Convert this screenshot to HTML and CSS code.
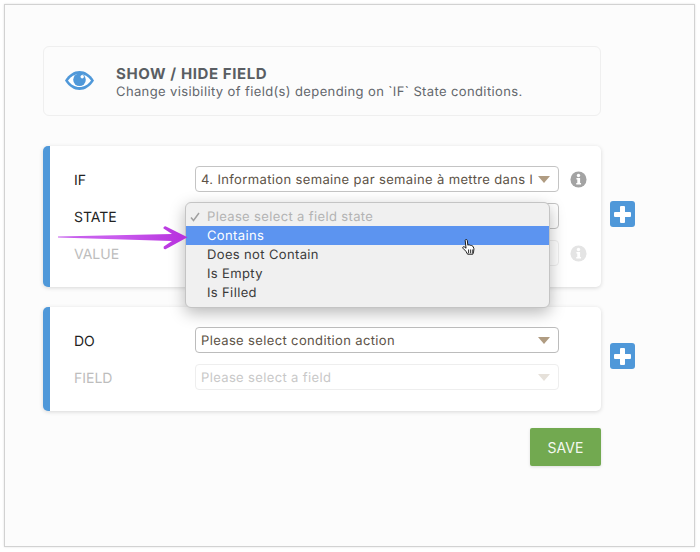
FILE: index.html
```html
<!DOCTYPE html>
<html lang="en">
<head>
<meta charset="utf-8">
<title>Show / Hide Field</title>
<link rel="stylesheet" href="styles.css">
</head>
<body>
<main class="frame">
  <header class="intro">
    <svg class="eye" viewBox="0 0 29 19" width="29" height="19" aria-hidden="true">
      <path fill="#4f98d9" d="M0 9.500C4 3.200 9 0 14.500 0S25 3.200 29 9.500C25 15.800 20 19 14.500 19S4 15.800 0 9.500z"/>
      <path fill="#fff" d="M3 9.500C6 5.200 9.600 3 14.500 3S23 5.200 26 9.500C23 13.800 19.400 16 14.500 16S6 13.800 3 9.500z"/>
      <circle cx="14.500" cy="8.800" r="6.300" fill="#4f98d9"/>
      <circle cx="17.200" cy="5.700" r="1.700" fill="#fff"/>
    </svg>
    <div class="intro-text">
      <h1 class="intro-title">SHOW / HIDE FIELD</h1>
      <p class="intro-sub">Change visibility of field(s) depending on `IF` State conditions.</p>
    </div>
  </header>

  <section class="group group-if">
    <div class="card">
      <div class="row">
        <span class="label">IF</span>
        <div class="select"><span class="select-text">4. Information semaine par semaine à mettre dans l</span><i class="caret"></i></div>
        <svg class="info" viewBox="0 0 18 18" width="17" height="17" aria-hidden="true"><circle cx="9" cy="9" r="8.500" fill="#a3a3a3"/><circle cx="9" cy="4.700" r="1.800" fill="#fff"/><path fill="#fff" d="M6.800 7.400h3.900v5.400h1v1.600H6.600v-1.600h1.100V9H6.800z"/></svg>
      </div>
      <div class="row">
        <span class="label">STATE</span>
        <div class="select"></div>
        <span class="info-space"></span>
      </div>
      <div class="row row-off">
        <span class="label">VALUE</span>
        <div class="select"></div>
        <svg class="info" viewBox="0 0 18 18" width="17" height="17" aria-hidden="true"><circle cx="9" cy="9" r="8.500" fill="#e4e4e4"/><circle cx="9" cy="4.700" r="1.800" fill="#fff"/><path fill="#fff" d="M6.800 7.400h3.900v5.400h1v1.600H6.600v-1.600h1.100V9H6.800z"/></svg>
      </div>
    </div>
    <button class="add" aria-label="Add"><i class="add-h"></i><i class="add-v"></i></button>

    <ul class="menu">
      <li class="menu-item menu-head"><svg class="tick" viewBox="0 0 10 10" width="10" height="10" aria-hidden="true"><path fill="none" stroke="#a0a0a0" stroke-width="1.500" d="M1 5.500l2.500 3L9 1"/></svg>Please select a field state</li>
      <li class="menu-item menu-on">Contains</li>
      <li class="menu-item">Does not Contain</li>
      <li class="menu-item">Is Empty</li>
      <li class="menu-item">Is Filled</li>
    </ul>
    <svg class="arrow" viewBox="0 0 130 26" width="130" height="26" aria-hidden="true">
      <defs><linearGradient id="arrowfill" x1="0" x2="1" y1="0" y2="0"><stop offset="0" stop-color="#c660ec"/><stop offset="0.45" stop-color="#c95cee"/><stop offset="1" stop-color="#b62fdd"/></linearGradient></defs>
      <path fill="url(#arrowfill)" d="M0 11.500L114 9 105.500 3.500Q105 1.500 107.500 1.200L129.500 12.300 107.500 24.200Q105 24.500 105.800 21.500L114 16 0 12.500z"/>
    </svg>
    <svg class="hand" viewBox="0 0 16 20" width="16" height="19" aria-hidden="true">
      <path fill="#fff" stroke="#111" stroke-width="1" stroke-linejoin="round" d="M4 1.500c0-1.300 2-1.300 2.200 0l.6 5 .8-.3 1 .1 1 .4 1.200.2 1.500.9.900 2.500-.4 3.300-.8 2.400H6.500L4.800 13 1.700 9.800c-.9-1.100.4-2.200 1.500-1.400l1.700 1.300z"/>
      <path stroke="#333" stroke-width="1" d="M7.500 11v4M9.500 11v4M11.500 11v4"/>
    </svg>
  </section>

  <section class="group group-do">
    <div class="card">
      <div class="row">
        <span class="label">DO</span>
        <div class="select select-strong"><span class="select-text">Please select condition action</span><i class="caret"></i></div>
        <span class="info-space"></span>
      </div>
      <div class="row row-off">
        <span class="label">FIELD</span>
        <div class="select"><span class="select-text">Please select a field</span><i class="caret"></i></div>
        <span class="info-space"></span>
      </div>
    </div>
    <button class="add" aria-label="Add"><i class="add-h"></i><i class="add-v"></i></button>
  </section>

  <div class="actions"><button class="save">SAVE</button></div>
</main>
</body>
</html>
```
FILE: styles.css
```css
* { box-sizing: border-box; }
html, body { margin: 0; padding: 0; }
body { width: 700px; height: 552px; background: #fff; font-family: Inter, "Liberation Sans", sans-serif; text-rendering: geometricPrecision; overflow: hidden; }

.frame {
  width: 691px; height: 543px; margin: 4px 0 0 4px;
  padding: 41px 0 0 38px;
  background: #fcfcfc;
  border: 1px solid #d2d2d2;
  box-shadow: 0 0 2px rgba(0,0,0,.12);
}

.intro {
  width: 558px; height: 70px;
  display: flex; align-items: center;
  padding: 0 0 1px 21px;
  border: 1px solid #efefef; border-radius: 6px;
}
.eye { flex: none; }
.intro-text { margin-left: 22px; padding-top: 5px; }
.intro-title { margin: 0; font-size: 15px; line-height: 18px; font-weight: 700; color: #5a5e63; letter-spacing: .6px; }
.intro-sub { margin: 0; font-size: 13px; line-height: 18px; color: #63676c; letter-spacing: .38px; }

.group { position: relative; display: flex; align-items: center; gap: 9px; }
.group-if { margin-top: 30px; }
.group-do { margin-top: 20px; }

.card {
  width: 558px; padding: 20px 0 21px;
  display: flex; flex-direction: column; gap: 11px;
  background: #fff;
  border-left: 7px solid #4f98d9;
  border-radius: 5px;
  box-shadow: 0 1px 4px rgba(0,0,0,.15);
}
.row { display: flex; align-items: center; height: 26px; padding-left: 24px; }
.label { width: 121px; padding-top: 3px; font-size: 14px; color: #222; }
.row-off .label { color: #bdbdbd; }

.select {
  position: relative; width: 364px; height: 26px;
  display: flex; align-items: center; padding: 2px 0 0 5px;
  border: 1px solid #c4c4c4; border-radius: 4px;
  background: #fff;
}
.select-strong { border-color: #bcbcbc; }
.row-off .select { border-color: #eee; }
.select-text { font-size: 13px; color: #5c5246; letter-spacing: .36px; white-space: nowrap; }
.row-off .select-text { color: #c8c8c8; }
.caret {
  position: absolute; right: 8px; top: 9px;
  border-style: solid; border-width: 7px 6px 0; border-color: #b09c82 transparent transparent;
}
.row-off .caret { border-top-color: #e6e1da; }
.info { flex: none; margin-left: 11px; }
.info-space { flex: none; width: 17px; margin-left: 11px; }

.add {
  position: relative; flex: none; width: 25px; height: 26px; margin: 0 0 6px; padding: 0;
  background: #4f98d9; border: 0; border-radius: 3px;
}
.add-h, .add-v { position: absolute; background: #fff; border-radius: 1px; }
.add-h { left: 4px; top: 11px; width: 17px; height: 5px; }
.add-v { left: 10px; top: 5px; width: 5px; height: 17px; }

.menu {
  position: absolute; z-index: 2; left: 142px; top: 56px; width: 365px; margin: 0; padding: 4px 0 5px;
  list-style: none;
  background: #f0f0f0;
  border: 1px solid #c4c4c4; border-radius: 6px;
  box-shadow: 0 5px 16px rgba(0,0,0,.28);
}
.menu-item { position: relative; height: 19px; line-height: 21px; padding-left: 21px; font-size: 13px; color: #3a3a3a; letter-spacing: .36px; white-space: nowrap; }
.menu-head { color: #b3b3b3; }
.menu-on { background: #5c94f0; color: #fff; }
.tick { position: absolute; left: 4px; top: 5px; }

.arrow { position: absolute; z-index: 3; left: 15px; top: 79px; }
.hand { position: absolute; z-index: 3; left: 418px; top: 93px; }

.actions { width: 558px; margin-top: 17px; display: flex; justify-content: flex-end; }
.save {
  width: 71px; height: 38px; padding: 0;
  background: #72a950; color: #f4f8f0;
  border: 0; border-radius: 2px;
  font: 14px Inter, "Liberation Sans", sans-serif;
  box-shadow: 0 1px 3px rgba(0,0,0,.12);
}
```
